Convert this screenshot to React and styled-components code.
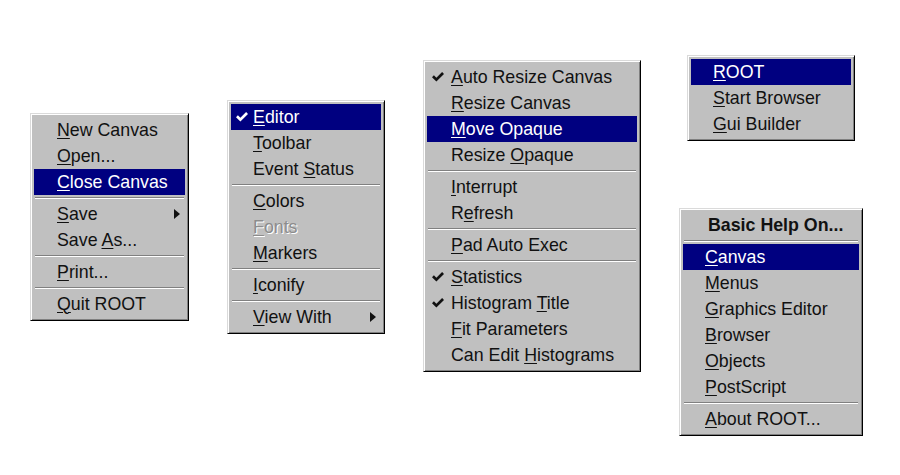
import styled, { createGlobalStyle } from "styled-components";

const GlobalStyle = createGlobalStyle`
  html, body {
    margin: 0;
    padding: 0;
    background: #ffffff;
  }
  body {
    font-family: "Liberation Sans", Arial, Helvetica, sans-serif;
  }
`;

const Desktop = styled.div`
  display: flex;
  align-items: flex-start;
  gap: 38px;
  width: 900px;
  height: 475px;
  padding-left: 30px;
  box-sizing: border-box;
  background: #ffffff;
  overflow: hidden;
`;

const Column = styled.div`
  display: flex;
  flex-direction: column;
  align-items: center;
  gap: 67px;
  margin-top: ${(p) => p.$top}px;
`;

const Menu = styled.div`
  width: ${(p) => p.$w}px;
  box-sizing: border-box;
  padding: 3px;
  background: #c0c0c0;
  border: 1px solid;
  border-color: #dadada #000000 #000000 #dadada;
  box-shadow: inset 1px 1px #ffffff, inset -1px -1px #808080;
  font-size: 17.8px;
  color: #111111;
`;

const Item = styled.div`
  display: flex;
  align-items: center;
  height: 26px;
  white-space: nowrap;
  background: ${(p) => (p.$active ? "#000080" : "transparent")};
  color: ${(p) => (p.$active ? "#ffffff" : p.$disabled ? "#8c8c8c" : "#111111")};
  text-shadow: ${(p) => (p.$disabled ? "1px 1px 0 #ffffff" : "none")};
`;

const Gutter = styled.span`
  display: flex;
  align-items: center;
  flex: none;
  width: ${(p) => p.$w}px;
  padding-left: 5px;
  box-sizing: border-box;
`;

const Title = styled.div`
  display: flex;
  align-items: center;
  height: 26px;
  padding-left: 25px;
  font-weight: bold;
  white-space: nowrap;
`;

const Hot = styled.span`
  text-decoration: underline;
  text-decoration-thickness: 1px;
  text-underline-offset: 2px;
`;

const Arrow = styled.span`
  margin-left: auto;
  margin-right: 5px;
  width: 0;
  height: 0;
  border-left: 6px solid currentColor;
  border-top: 5px solid transparent;
  border-bottom: 5px solid transparent;
`;

const Separator = styled.div`
  height: 0;
  margin: 2px 1px;
  border-top: 1px solid #808080;
  border-bottom: 1px solid #ffffff;
`;

const Check = () => (
  <svg width="12" height="10" viewBox="0 0 12 10" aria-hidden="true">
    <path d="M0 5.2 L1.9 3.3 L4.4 5.8 L10.1 0.1 L12 2 L4.4 9.6 Z" fill="currentColor" />
  </svg>
);

// "&" marks the hot key letter, as in ROOT menu labels
const Label = ({ text }) => {
  const i = text.indexOf("&");
  if (i < 0) return <span>{text}</span>;
  return (
    <span>
      {text.slice(0, i)}
      <Hot>{text[i + 1]}</Hot>
      {text.slice(i + 2)}
    </span>
  );
};

const Entry = ({ text, indent, active, disabled, checked, sub }) => (
  <Item $active={active} $disabled={disabled}>
    <Gutter $w={indent}>{checked && <Check />}</Gutter>
    <Label text={text} />
    {sub && <Arrow />}
  </Item>
);

const PopupMenu = ({ width, indent = 22, title, entries }) => (
  <Menu $w={width}>
    {title && <Title>{title}</Title>}
    {entries.map((e, i) =>
      e === "-" ? (
        <Separator key={i} />
      ) : (
        <Entry key={i} indent={indent} {...e} />
      )
    )}
  </Menu>
);

const fileMenu = [
  { text: "&New Canvas" },
  { text: "&Open..." },
  { text: "&Close Canvas", active: true },
  "-",
  { text: "&Save", sub: true },
  { text: "Save &As..." },
  "-",
  { text: "&Print..." },
  "-",
  { text: "&Quit ROOT" },
];

const viewMenu = [
  { text: "&Editor", active: true, checked: true },
  { text: "&Toolbar" },
  { text: "Event &Status" },
  "-",
  { text: "&Colors" },
  { text: "&Fonts", disabled: true },
  { text: "&Markers" },
  "-",
  { text: "&Iconify" },
  "-",
  { text: "&View With", sub: true },
];

const optionsMenu = [
  { text: "&Auto Resize Canvas", checked: true },
  { text: "&Resize Canvas" },
  { text: "&Move Opaque", active: true },
  { text: "Resize &Opaque" },
  "-",
  { text: "&Interrupt" },
  { text: "R&efresh" },
  "-",
  { text: "&Pad Auto Exec" },
  "-",
  { text: "&Statistics", checked: true },
  { text: "Histogram &Title", checked: true },
  { text: "&Fit Parameters" },
  { text: "Can Edit &Histograms" },
];

const inspectMenu = [
  { text: "&ROOT", active: true },
  { text: "&Start Browser" },
  { text: "&Gui Builder" },
];

const helpMenu = [
  "-",
  { text: "&Canvas", active: true },
  { text: "&Menus" },
  { text: "&Graphics Editor" },
  { text: "&Browser" },
  { text: "&Objects" },
  { text: "&PostScript" },
  "-",
  { text: "&About ROOT..." },
];

const App = () => (
  <>
    <GlobalStyle />
    <Desktop>
      <Column $top={113}>
        <PopupMenu width={159} indent={23} entries={fileMenu} />
      </Column>
      <Column $top={100}>
        <PopupMenu width={158} entries={viewMenu} />
      </Column>
      <Column $top={60}>
        <PopupMenu width={218} indent={24} entries={optionsMenu} />
      </Column>
      <Column $top={55}>
        <PopupMenu width={168} entries={inspectMenu} />
        <PopupMenu width={184} title="Basic Help On..." entries={helpMenu} />
      </Column>
    </Desktop>
  </>
);

export default App;
